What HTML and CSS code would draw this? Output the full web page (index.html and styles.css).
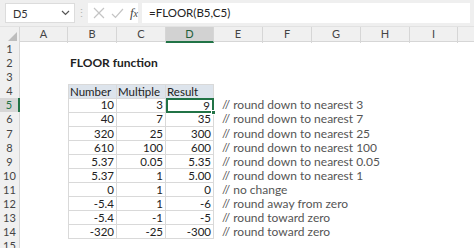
FILE: index.html
```html
<!DOCTYPE html>
<html>
<head lang="en">
	<meta charset="UTF-8">
	<title>FLOOR function</title>
	<link rel="stylesheet" href="styles.css">
</head>
<body>
	<div class="bar">
		<div class="namebox">
			<span>D5</span>
			<svg width="9" height="6" viewBox="0 0 9 6"><path d="M1 1 L4.5 4.5 L8 1" fill="none" stroke="#555" stroke-width="1.2"/></svg>
		</div>
		<div class="dots">&#8942;</div>
		<div class="btns">
			<svg width="12" height="12" viewBox="0 0 12 12"><path d="M1 1 L11 11 M11 1 L1 11" stroke="#c4c4c4" stroke-width="1.2"/></svg>
			<svg width="13" height="12" viewBox="0 0 13 12"><path d="M1 7 L4.5 10.5 L12 2" fill="none" stroke="#c4c4c4" stroke-width="1.2"/></svg>
			<span class="fx"><i>f</i><i class="x">x</i></span>
		</div>
		<div class="formula">=FLOOR(B5,C5)</div>
	</div>

	<div class="sheet">
		<div class="row head">
			<div class="rh corner"><span class="tri"></span></div>
			<div class="ch">A</div><div class="ch">B</div><div class="ch">C</div><div class="ch sel">D</div><div class="ch">E</div>
			<div class="ch">F</div><div class="ch">G</div><div class="ch">H</div><div class="ch">I</div><div class="ch last"></div>
		</div>
		<div class="row"><div class="rh">1</div></div>
		<div class="row"><div class="rh">2</div><div class="c"></div><div class="c title">FLOOR function</div></div>
		<div class="row"><div class="rh">3</div></div>
		<div class="row"><div class="rh">4</div><div class="c"></div>
			<div class="c t th">Number</div><div class="c t th">Multiple</div><div class="c t th">Result</div></div>
		<div class="row"><div class="rh sel">5</div><div class="c"></div>
			<div class="c t">10</div><div class="c t">3</div><div class="c t active">9<span class="handle"></span></div><div class="c note">// round down to nearest 3</div></div>
		<div class="row"><div class="rh">6</div><div class="c"></div>
			<div class="c t">40</div><div class="c t">7</div><div class="c t">35</div><div class="c note">// round down to nearest 7</div></div>
		<div class="row"><div class="rh">7</div><div class="c"></div>
			<div class="c t">320</div><div class="c t">25</div><div class="c t">300</div><div class="c note">// round down to nearest 25</div></div>
		<div class="row"><div class="rh">8</div><div class="c"></div>
			<div class="c t">610</div><div class="c t">100</div><div class="c t">600</div><div class="c note">// round down to nearest 100</div></div>
		<div class="row"><div class="rh">9</div><div class="c"></div>
			<div class="c t">5.37</div><div class="c t">0.05</div><div class="c t">5.35</div><div class="c note">// round down to nearest 0.05</div></div>
		<div class="row"><div class="rh">10</div><div class="c"></div>
			<div class="c t">5.37</div><div class="c t">1</div><div class="c t">5.00</div><div class="c note">// round down to nearest 1</div></div>
		<div class="row"><div class="rh">11</div><div class="c"></div>
			<div class="c t">0</div><div class="c t">1</div><div class="c t">0</div><div class="c note">// no change</div></div>
		<div class="row"><div class="rh">12</div><div class="c"></div>
			<div class="c t">-5.4</div><div class="c t">1</div><div class="c t">-6</div><div class="c note">// round away from zero</div></div>
		<div class="row"><div class="rh">13</div><div class="c"></div>
			<div class="c t">-5.4</div><div class="c t">-1</div><div class="c t">-5</div><div class="c note">// round toward zero</div></div>
		<div class="row"><div class="rh">14</div><div class="c"></div>
			<div class="c t">-320</div><div class="c t">-25</div><div class="c t">-300</div><div class="c note">// round toward zero</div></div>
		<div class="row"><div class="rh">15</div></div>
	</div>
</body>
</html>
```

FILE: styles.css
```css
*{
	margin:0;
	padding:0;
	box-sizing:border-box;
}
body{
	width:474px;
	height:248px;
	overflow:hidden;
	background:#fff;
	font-family:Lato, "Open Sans", sans-serif;
	color:#222;
}
.bar{
	height:27px;
	background:#efefef;
	display:flex;
	align-items:center;
	padding:0 4px 0 5px;
	border-bottom:1px solid #e2e2e2;
}
.namebox{
	width:70px;
	height:20px;
	background:#fff;
	border:1px solid #dcdcdc;
	display:flex;
	align-items:center;
	justify-content:space-between;
	padding:0 4px 0 7px;
	font-size:11px;
	color:#333;
}
.dots{
	width:13px;
	text-align:center;
	color:#b5b5b5;
	font-size:11px;
}
.btns{
	width:50px;
	height:20px;
	background:#fff;
	display:flex;
	align-items:center;
	gap:6px;
	padding-left:5px;
}
.fx{
	font-family:"Liberation Serif", serif;
	font-size:13px;
	color:#444;
}
.fx .x{
	font-size:10px;
}
.formula{
	flex:1;
	height:20px;
	margin-left:4px;
	background:#fff;
	font-size:11.5px;
	line-height:20px;
	padding-left:7px;
	color:#222;
}
.row{
	display:grid;
	grid-template-columns:20px 48px 49px 49px 48px 49px 49px 49px 49px 48px 20px;
	height:14.1px;
}
.row.head{
	height:15px;
	background:#f0f0f0;
	border-bottom:1px solid #d6d6d6;
}
.rh{
	background:#f0f0f0;
	border-right:1px solid #d6d6d6;
	font-size:11px;
	line-height:14px;
	text-align:center;
	color:#444;
}
.rh.sel{
	background:#d6d6d6;
	color:#217346;
	border-right:2px solid #217346;
}
.corner{
	position:relative;
}
.tri{
	position:absolute;
	right:2px;
	bottom:2px;
	width:0;
	height:0;
	border-left:9px solid transparent;
	border-bottom:9px solid #bdbdbd;
}
.ch{
	font-size:11px;
	line-height:14px;
	text-align:center;
	color:#444;
	border-right:1px solid #d6d6d6;
}
.ch.sel{
	background:#d2d2d2;
	color:#1e5e3a;
	border-bottom:2px solid #217346;
}
.ch.last{
	border-right:none;
}
.c{
	font-size:12px;
	line-height:14px;
	white-space:nowrap;
	padding:0 2px;
}
.title{
	font-weight:bold;
	overflow:visible;
}
.t{
	font-size:11.5px;
	text-align:right;
	border-right:1px solid #d9d9d9;
	border-bottom:1px solid #d9d9d9;
	line-height:13px;
}
.row .t:nth-child(3){
	border-left:1px solid #d9d9d9;
}
.th{
	background:#dde4ec;
	text-align:left;
	border-top:1px solid #d9d9d9;
	padding-left:1px;
}
.active{
	position:relative;
	border:2px solid #217346;
	line-height:11px;
}
.handle{
	position:absolute;
	right:-4px;
	bottom:-4px;
	width:5px;
	height:5px;
	background:#217346;
	border:1px solid #fff;
}
.note{
	color:#555;
	padding-left:8px;
	overflow:visible;
}
```
